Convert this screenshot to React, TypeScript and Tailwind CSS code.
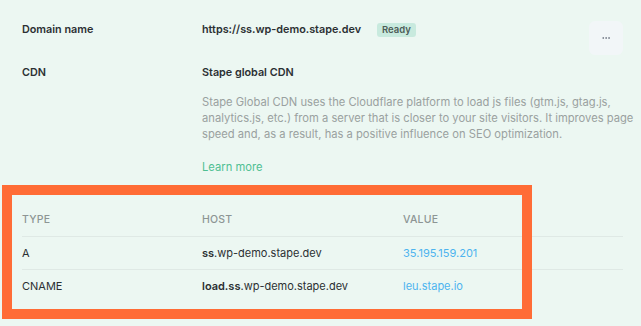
import { MoreHorizontal } from "lucide-react"

const records = [
  { type: "A", bold: "ss", rest: ".wp-demo.stape.dev", value: "35.195.159.201" },
  { type: "CNAME", bold: "load.ss", rest: ".wp-demo.stape.dev", value: "leu.stape.io" },
]

export default function App() {
  return (
    <div className="relative h-[326px] w-[641px] overflow-hidden bg-[#ecf7f2] font-['Inter',sans-serif] text-[#2b3033]">
      <div className="pl-[22px] pr-[18px] pt-[21px]">
        {/* Domain row */}
        <div className="flex items-start">
          <div className="w-[180px] shrink-0 pt-[1px] text-[10.8px] font-semibold leading-[16px]">Domain name</div>
          <div className="flex flex-1 items-center gap-4 pt-[1px]">
            <span className="text-[10.8px] font-semibold leading-[16px]">https://ss.wp-demo.stape.dev</span>
            <span className="rounded-[3px] bg-[#c8eade] px-[5px] py-[1px] text-[9.5px] font-semibold leading-[12px] text-[#4d5c57]">
              Ready
            </span>
          </div>
          <button className="flex h-[34px] w-[34px] items-center justify-center rounded-[6px] bg-[#f2f6f8] text-[#6b7280]">
            <MoreHorizontal size={10} strokeWidth={2} />
          </button>
        </div>

        {/* CDN row */}
        <div className="mt-[10px] flex items-start">
          <div className="w-[180px] shrink-0 text-[10.8px] font-semibold leading-[16px]">CDN</div>
          <div className="min-w-0 flex-1">
            <div className="text-[10.8px] font-semibold leading-[16px]">Stape global CDN</div>
            <p className="mt-[13px] w-[436px] text-[11.2px] leading-[16px] text-[#9aa1a0]">
              Stape Global CDN uses the Cloudflare platform to load js files (gtm.js, gtag.js, analytics.js, etc.) from a
              server that is closer to your site visitors. It improves page speed and, as a result, has a positive
              influence on SEO optimization.
            </p>
            <a className="mt-[17px] block text-[11.2px] leading-[16px] text-[#4fbf92]">Learn more</a>
          </div>
        </div>

        {/* DNS records table */}
        <div className="mt-[29px]">
          <div className="flex h-[33px] items-center border-b border-[#dfe9e5] text-[10.5px] font-medium tracking-[0.02em] text-[#8d9594]">
            <div className="w-[180px] shrink-0">TYPE</div>
            <div className="w-[201px] shrink-0">HOST</div>
            <div>VALUE</div>
          </div>
          {records.map((r, i) => (
            <div
              key={r.type}
              className={`flex h-[33px] items-center text-[11px] ${i === 0 ? "border-b border-[#dfe9e5]" : ""}`}
            >
              <div className="w-[180px] shrink-0">{r.type}</div>
              <div className="w-[201px] shrink-0">
                <span className="font-semibold">{r.bold}</span>
                {r.rest}
              </div>
              <div className="text-[#4db4ef]">{r.value}</div>
            </div>
          ))}
        </div>
      </div>

      {/* annotation frame */}
      <div className="pointer-events-none absolute left-[2px] top-[185px] h-[134px] w-[530px] border-[10px] border-[#ff6c36]" />
    </div>
  )
}
